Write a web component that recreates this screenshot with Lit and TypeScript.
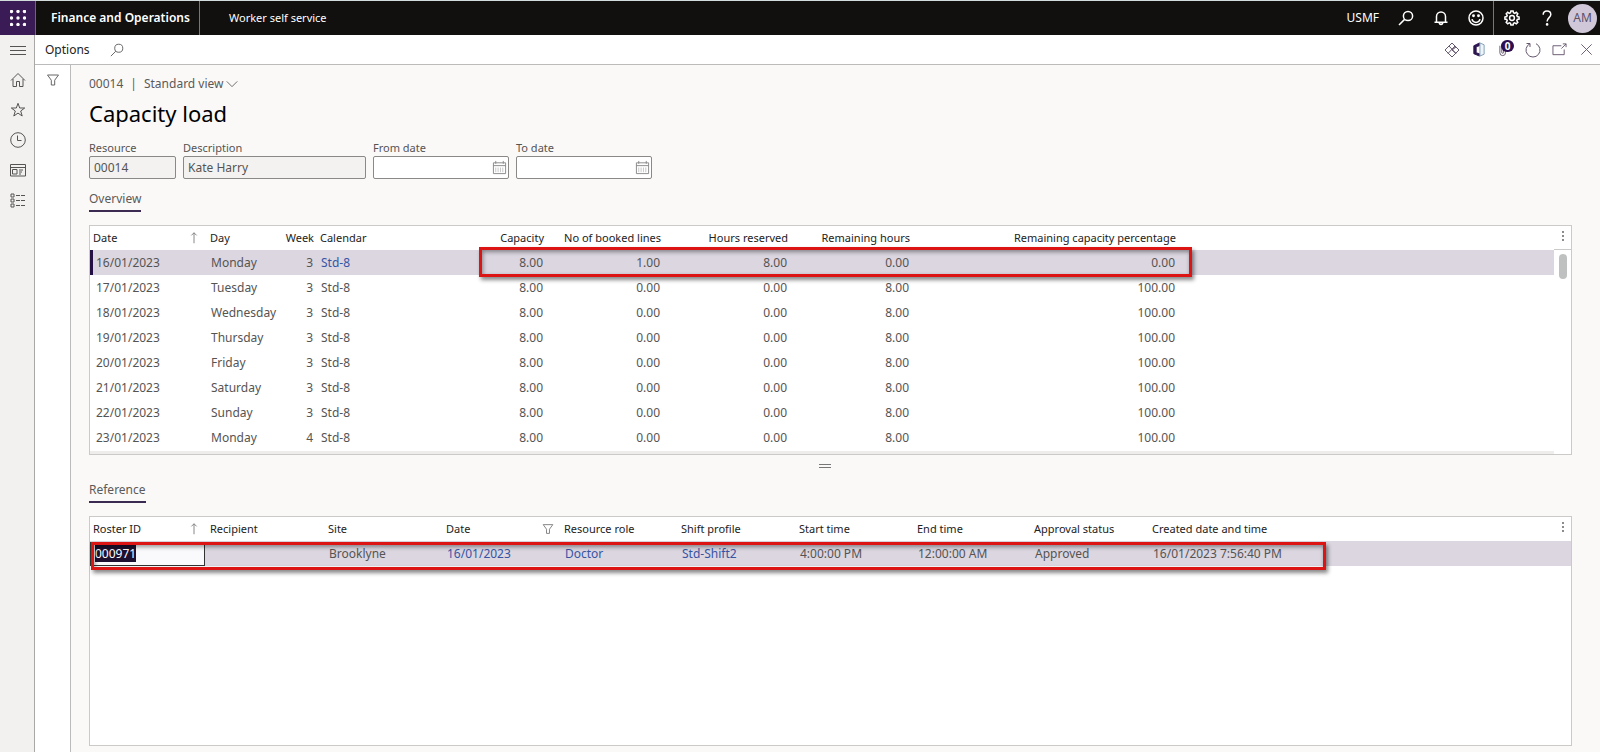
import { LitElement, html, css, svg, nothing } from "lit";
import { customElement, query } from "lit/decorators.js";

const icon = (body: unknown, size = 16) =>
  html`<svg class="icon" width=${size} height=${size} viewBox="0 0 16 16" aria-hidden="true">${body}</svg>`;

const glyph = {
  search: svg`<circle cx="10" cy="6" r="4.6"/><path d="M6.6 9.4 1 15"/>`,
  bell: svg`<path d="M3.5 12V6.5a4.5 4.5 0 0 1 9 0V12M1.5 12.2h13M6.3 12.6a1.7 1.9 0 0 0 3.4 0"/>`,
  smile: svg`<circle cx="8" cy="8" r="7"/><path d="M4 9.2a4.1 4.1 0 0 0 8 0"/><circle cx="5.5" cy="5.8" r=".7" fill="currentColor"/><circle cx="10.5" cy="5.8" r=".7" fill="currentColor"/>`,
  gear: svg`<path d="M6.9 1h2.2l.4 1.8 1.2.5 1.6-1 1.5 1.5-1 1.6.5 1.2 1.8.4v2.1l-1.8.4-.5 1.2 1 1.6-1.5 1.5-1.6-1-1.2.5-.4 1.8H6.9l-.4-1.8-1.2-.5-1.6 1-1.5-1.5 1-1.6-.5-1.2L.9 9.1V7l1.8-.4.5-1.2-1-1.6 1.5-1.5 1.6 1 1.2-.5z"/><circle cx="8" cy="8" r="2.4"/>`,
  help: svg`<path d="M4.2 4.8C4.2 2.4 5.8 1 8 1s3.8 1.4 3.8 3.5c0 3-3.7 3.4-3.7 7"/><circle cx="8.1" cy="14.4" r=".6" fill="currentColor"/>`,
  menu: svg`<path d="M0 4.5h16M0 8.5h16M0 12.5h16"/>`,
  home: svg`<path d="M1 8.5 8 1.5l7 7M3 7v7.5h3.5V9.5h3v5H13V7"/>`,
  star: svg`<path d="M8 1.3 9.7 6h5L10.7 9l1.5 5L8 11.1 3.8 14l1.5-5-4-3h5z"/>`,
  clock: svg`<circle cx="8" cy="8" r="7.3"/><path d="M7.5 3.5v5h4"/>`,
  workspace: svg`<path d="M.5 2.5h15v11.5H.5zM.5 5.5h15M2.5 7.5h4.5v4.5H2.5zM9 8h4M9 10h3M9 12h2"/>`,
  modules: svg`<path d="M1 2h3v3H1zM1 7h3v3H1zM1 12h3v3H1zM6 3.5h4M11 3.5h4M6 8.5h4M11 8.5h4M6 13.5h4M11 13.5h4"/>`,
  funnel: svg`<path d="M2.5 3h11L9.7 8.2V13H6.3V8.2z"/>`,
  diamond: svg`<path d="M5.500 3.500 8 1l7 7-7 7-2.500-2.500M8 1 1 8l7 7M5 4l7 7.500M11 4 4 11.500M8 7.500 11 4.500M12 5 8 8l4 3.500"/>`,
  office: svg`<path d="M3 4 9 1v3L5.5 5v6.5L9 12.5V15L3 12.5z" fill="#2c1650" stroke="#2c1650"/><path d="M9.5 1 14 3v10l-4.5 2z" fill="#eef4f8" stroke="#7f9db5"/>`,
  clip: svg`<path d="M2 4v7.5a3 3 0 0 0 6 0V3.5a2 2 0 0 0-4 0V11a1 1 0 0 0 2 0V5"/>`,
  refresh: svg`<path d="M5 1.7A7 7 0 1 0 11 1.7M1.5 1.5H5V5"/>`,
  popout: svg`<path d="M10 4H1v9.5h12V8M10 7l5-5M11.5 2H15v3.5"/>`,
  close: svg`<path d="m2.5 2.5 11 11M13.5 2.5l-11 11"/>`,
  chevron: svg`<path d="m2 5 6 6 6-6"/>`,
  up: svg`<path d="M8 14V2M5 5l3-3 3 3"/>`,
  calendar: svg`<path d="M1.5 3h13v11.5h-13zM1.5 6h13M4 1v3M12 1v3"/><path d="M4 8v5M6.5 8v5M9 8v5M11.5 8v5" stroke-opacity=".5"/>`,
};

interface Column {
  label: string;
  width?: number;
  right?: boolean;
  mark?: "up" | "funnel";
}

const loadColumns: Column[] = [
  { label: "Date", width: 117, mark: "up" },
  { label: "Day", width: 74 },
  { label: "Week", width: 36, right: true },
  { label: "Calendar", width: 120 },
  { label: "Capacity", width: 110, right: true },
  { label: "No of booked lines", width: 117, right: true },
  { label: "Hours reserved", width: 127, right: true },
  { label: "Remaining hours", width: 122, right: true },
  { label: "Remaining capacity percentage", width: 266, right: true },
];

const loadRows = [
  ["16/01/2023", "Monday", "3", "Std-8", "8.00", "1.00", "8.00", "0.00", "0.00"],
  ["17/01/2023", "Tuesday", "3", "Std-8", "8.00", "0.00", "0.00", "8.00", "100.00"],
  ["18/01/2023", "Wednesday", "3", "Std-8", "8.00", "0.00", "0.00", "8.00", "100.00"],
  ["19/01/2023", "Thursday", "3", "Std-8", "8.00", "0.00", "0.00", "8.00", "100.00"],
  ["20/01/2023", "Friday", "3", "Std-8", "8.00", "0.00", "0.00", "8.00", "100.00"],
  ["21/01/2023", "Saturday", "3", "Std-8", "8.00", "0.00", "0.00", "8.00", "100.00"],
  ["22/01/2023", "Sunday", "3", "Std-8", "8.00", "0.00", "0.00", "8.00", "100.00"],
  ["23/01/2023", "Monday", "4", "Std-8", "8.00", "0.00", "0.00", "8.00", "100.00"],
];

const rosterColumns: Column[] = [
  { label: "Roster ID", width: 117, mark: "up" },
  { label: "Recipient", width: 118 },
  { label: "Site", width: 118 },
  { label: "Date", width: 118, mark: "funnel" },
  { label: "Resource role", width: 117 },
  { label: "Shift profile", width: 118 },
  { label: "Start time", width: 118 },
  { label: "End time", width: 117 },
  { label: "Approval status", width: 118 },
  { label: "Created date and time" },
];

@customElement("app-root")
export class AppRoot extends LitElement {
  @query(".roster") roster!: HTMLInputElement;

  static styles = css`
    :host {
      display: flex;
      flex-direction: column;
      box-sizing: border-box;
      min-height: 100vh;
      border-top: 1px solid #d3dcdc;
      background: #faf9f8;
      color: #555453;
      font: 12px/16px "Noto Sans", "Open Sans", sans-serif;
    }
    * { box-sizing: border-box; }
    button, input { font: inherit; color: inherit; margin: 0; }
    button {
      display: inline-flex;
      align-items: center;
      justify-content: center;
      padding: 0;
      border: 0;
      background: none;
    }
    .icon { display: block; flex: none; fill: none; stroke: currentColor; }
    a { color: #3654a5; text-decoration: none; }

    .top { display: flex; height: 34px; background: #11100f; color: #fff; }
    .waffle { width: 36px; background: #3b1b56; border-right: 1px solid #6a6a6a; }
    .waffle .icon { fill: #fff; stroke: none; }
    .brand {
      display: flex;
      align-items: center;
      width: 164px;
      padding-left: 15px;
      border-right: 1px solid #777;
      font-weight: 600;
      white-space: nowrap;
    }
    .module { display: flex; align-items: center; flex: 1; padding-left: 29px; font-size: 11px; }
    .tools { display: flex; align-items: center; }
    .tools button { width: 35px; height: 34px; }
    .tools .icon { stroke-width: 1.5; }
    .company { padding-right: 9px; }
    .system { display: flex; align-items: center; border-left: 1px solid #777; }
    .system .avatar {
      width: 29px;
      height: 29px;
      margin: 0 3px 0 4px;
      border-radius: 50%;
      background: #d0c8d8;
      color: #5a5068;
    }

    .body { display: flex; flex: 1; }
    .nav {
      display: flex;
      flex-direction: column;
      width: 35px;
      flex: none;
      background: #f2f1f0;
      border-right: 1px solid #a9a8a7;
    }
    .nav button { height: 30px; padding-left: 1px; }
    .page { display: flex; flex-direction: column; flex: 1; min-width: 0; }
    .actions {
      display: flex;
      align-items: center;
      height: 30px;
      padding: 0 0 0 10px;
      background: #fff;
      border-bottom: 1px solid #bbb;
    }
    .options { color: #222; }
    .find { margin-left: 20px; color: #555; }
    .spacer { flex: 1; }
    .actions .tool { position: relative; width: 27px; height: 28px; color: #66586f; }
    .count {
      position: absolute;
      top: 4px;
      left: 9px;
      width: 13px;
      height: 12px;
      border-radius: 6px;
      background: #2c0f50;
      color: #fff;
      font-weight: 700;
      font-size: 10px;
      line-height: 12px;
    }
    .work { display: flex; flex: 1; }
    .filters {
      width: 36px;
      flex: none;
      background: #fff;
      border-right: 1px solid #bbb;
      display: flex;
      flex-direction: column;
      align-items: center;
      padding-top: 7px;
      color: #666;
    }
    .content { display: flex; flex-direction: column; flex: 1; min-width: 0; padding: 11px 28px 6px 18px; }
    .crumbs { display: flex; align-items: center; gap: 7px; height: 16px; color: #5b5a59; }
    .view { gap: 1px; }
    h1 { margin: 5px 0 11px; color: #000; font-size: 22px; line-height: 32px; font-weight: 400; }
    .fields { display: flex; gap: 7px; align-items: flex-end; }
    .field { display: flex; flex-direction: column; width: 136px; }
    .field label { font-size: 11px; line-height: 16px; }
    .field.short { width: 87px; }
    .field.long { width: 183px; }
    .box {
      display: flex;
      align-items: center;
      height: 23px;
      border: 1px solid #8a8988;
      border-radius: 2px;
      background: #fff;
    }
    .box input {
      flex: 1;
      width: 100%;
      min-width: 0;
      height: 20px;
      padding: 0 4px;
      border: 0;
      outline: 0;
      background: none;
    }
    .box.locked { background: #f3f2f1; }
    .box button { padding-right: 1px; color: #888; }
    .tab {
      align-self: flex-start;
      margin: 11px 0 13px;
      padding-bottom: 2px;
      border-bottom: 2px solid #3b2a52;
      color: #5b5a59;
      line-height: 18px;
      font-size: 12px;
      font-weight: 400;
    }

    .grid { position: relative; border: 1px solid #cbcac9; background: #fff; }
    .grid.fill { flex: 1; }
    table { width: 100%; table-layout: fixed; border-collapse: separate; border-spacing: 0; }
    th {
      height: 24px;
      padding: 0 3px;
      color: #222;
      font-size: 11px;
      font-weight: 400;
      text-align: left;
      white-space: nowrap;
    }
    td { height: 25px; padding: 0 4px; white-space: nowrap; }
    .right { text-align: right; }
    .head { display: flex; justify-content: space-between; align-items: center; padding-right: 3px; color: inherit; }
    .head .icon { color: #777; }
    .current { background: #dbd6e0; }
    .load .current td:first-child { box-shadow: inset 3px 0 #241044; }
    .load td:first-child { padding-left: 6px; }
    .more { width: 17px; padding: 0; }
    .more .icon { fill: #555; stroke: none; }
    .load th.more { border-bottom: 1px solid #cbcac9; }
    .gutter { padding: 4px 0 0 5px; background: #fff; vertical-align: top; }
    .thumb { width: 8px; height: 25px; border-radius: 4px; background: #bfc0c0; }
    .peek { height: 4px; margin-right: 17px; background: #eeedec; border-top: 1px solid #fff; }
    .splitter { align-self: center; height: 22px; color: #777; margin-right: 12px; }
    .splitter + .tab { margin-top: 4px; }
    .entry { padding: 0; }
    .roster {
      display: block;
      width: 115px;
      height: 24px;
      padding: 0 4px;
      border: 1px solid #333;
      outline: 0;
      background: #faf9fb;
    }
    .roster::selection { background: #1d1030; color: #fff; }
    .callout {
      position: absolute;
      border: 3px solid #dd1414;
      box-shadow: 2px 3px 4px #0007, inset 1px 2px 4px #0006;
      pointer-events: none;
    }
    .callout.hours { top: 21px; left: 389px; width: 713px; height: 30px; }
    .callout.shift { top: 25px; left: 1px; width: 1235px; height: 28px; }
  `;

  firstUpdated() {
    this.roster.focus({ preventScroll: true });
    this.roster.select();
  }

  private columns(cols: Column[]) {
    return cols.map(
      (c) => html`<th scope="col" class=${c.right ? "right" : ""} width=${c.width ?? nothing}>
        ${c.mark ? html`<div class="head">${c.label}${icon(glyph[c.mark], 14)}</div>` : c.label}
      </th>`
    );
  }

  private more() {
    return html`<th class="more" width="17">
      <button class="more" aria-label="Grid options">
        ${icon(svg`<circle cx="8" cy="4" r=".9"/><circle cx="8" cy="8" r=".9"/><circle cx="8" cy="12" r=".9"/>`)}
      </button>
    </th>`;
  }

  private field(id: string, label: string, value: string, size: string) {
    const date = size === "";
    return html`<div class="field ${size}">
      <label for=${id}>${label}</label>
      <div class="box ${date ? "" : "locked"}">
        <input id=${id} .value=${value} ?readonly=${!date} />
        ${date ? html`<button aria-label="Choose ${label.toLowerCase()}">${icon(glyph.calendar, 15)}</button>` : nothing}
      </div>
    </div>`;
  }

  render() {
    const dots = [1.5, 8, 14.5];
    return html`
      <header class="top">
        <button class="waffle" aria-label="Apps">
          ${icon(dots.map((y) => dots.map((x) => svg`<circle cx=${x} cy=${y} r="1.7"/>`)))}
        </button>
        <div class="brand">Finance and Operations</div>
        <div class="module">Worker self service</div>
        <div class="tools">
          <span class="company">USMF</span>
          <button aria-label="Search">${icon(glyph.search)}</button>
          <button aria-label="Notifications">${icon(glyph.bell)}</button>
          <button aria-label="Feedback">${icon(glyph.smile)}</button>
          <div class="system">
            <button aria-label="Settings">${icon(glyph.gear)}</button>
            <button aria-label="Help">${icon(glyph.help)}</button>
            <button class="avatar" aria-label="Account">AM</button>
          </div>
        </div>
      </header>
      <div class="body">
        <nav class="nav">
          <button aria-label="Expand">${icon(glyph.menu)}</button>
          <button aria-label="Home">${icon(glyph.home)}</button>
          <button aria-label="Favorites">${icon(glyph.star)}</button>
          <button aria-label="Recent">${icon(glyph.clock)}</button>
          <button aria-label="Workspaces">${icon(glyph.workspace)}</button>
          <button aria-label="Modules">${icon(glyph.modules)}</button>
        </nav>
        <div class="page">
          <div class="actions">
            <button class="options">Options</button>
            <button class="find" aria-label="Find action">${icon(glyph.search, 14)}</button>
            <span class="spacer"></span>
            <button class="tool" aria-label="Power Apps">${icon(glyph.diamond)}</button>
            <button class="tool" aria-label="Open in Office">${icon(glyph.office, 15)}</button>
            <button class="tool" aria-label="Attachments">${icon(glyph.clip, 15)}<span class="count">0</span></button>
            <button class="tool" aria-label="Refresh">${icon(glyph.refresh)}</button>
            <button class="tool" aria-label="Open in new window">${icon(glyph.popout, 15)}</button>
            <button class="tool" aria-label="Close">${icon(glyph.close, 15)}</button>
          </div>
          <div class="work">
            <div class="filters"><button aria-label="Show filters">${icon(glyph.funnel)}</button></div>
            <main class="content">
              <div class="crumbs">
                <span>00014</span><span>|</span>
                <button class="view">Standard view ${icon(glyph.chevron, 14)}</button>
              </div>
              <h1>Capacity load</h1>
              <div class="fields">
                ${this.field("resource", "Resource", "00014", "short")}
                ${this.field("description", "Description", "Kate Harry", "long")}
                ${this.field("from", "From date", "", "")}
                ${this.field("to", "To date", "", "")}
              </div>
              <h2 class="tab">Overview</h2>
              <section class="grid load">
                <table>
                  <thead><tr>${this.columns(loadColumns)}<th></th>${this.more()}</tr></thead>
                  <tbody>
                    ${loadRows.map(
                      (row, i) => html`<tr class=${i === 0 ? "current" : ""}>
                        ${row.map(
                          (value, c) => html`<td class=${loadColumns[c].right ? "right" : ""}>
                            ${i === 0 && c === 3 ? html`<a href="#calendar">${value}</a>` : value}
                          </td>`
                        )}
                        <td></td>
                        ${i === 0 ? html`<td class="gutter" rowspan="8"><div class="thumb"></div></td>` : nothing}
                      </tr>`
                    )}
                  </tbody>
                </table>
                <div class="peek"></div>
                <div class="callout hours"></div>
              </section>
              <button class="splitter" aria-label="Resize">
                ${icon(svg`<path d="M2 6.5h12M2 9.5h12"/>`)}
              </button>
              <h2 class="tab">Reference</h2>
              <section class="grid fill">
                <table>
                  <thead><tr>${this.columns(rosterColumns)}${this.more()}</tr></thead>
                  <tbody>
                    <tr class="current">
                      <td class="entry"><input class="roster" aria-label="Roster ID" value="000971" /></td>
                      <td></td>
                      <td>Brooklyne</td>
                      <td><a href="#date">16/01/2023</a></td>
                      <td><a href="#role">Doctor</a></td>
                      <td><a href="#shift">Std-Shift2</a></td>
                      <td>4:00:00 PM</td>
                      <td>12:00:00 AM</td>
                      <td>Approved</td>
                      <td colspan="2">16/01/2023 7:56:40 PM</td>
                    </tr>
                  </tbody>
                </table>
                <div class="callout shift"></div>
              </section>
            </main>
          </div>
        </div>
      </div>
    `;
  }
}
